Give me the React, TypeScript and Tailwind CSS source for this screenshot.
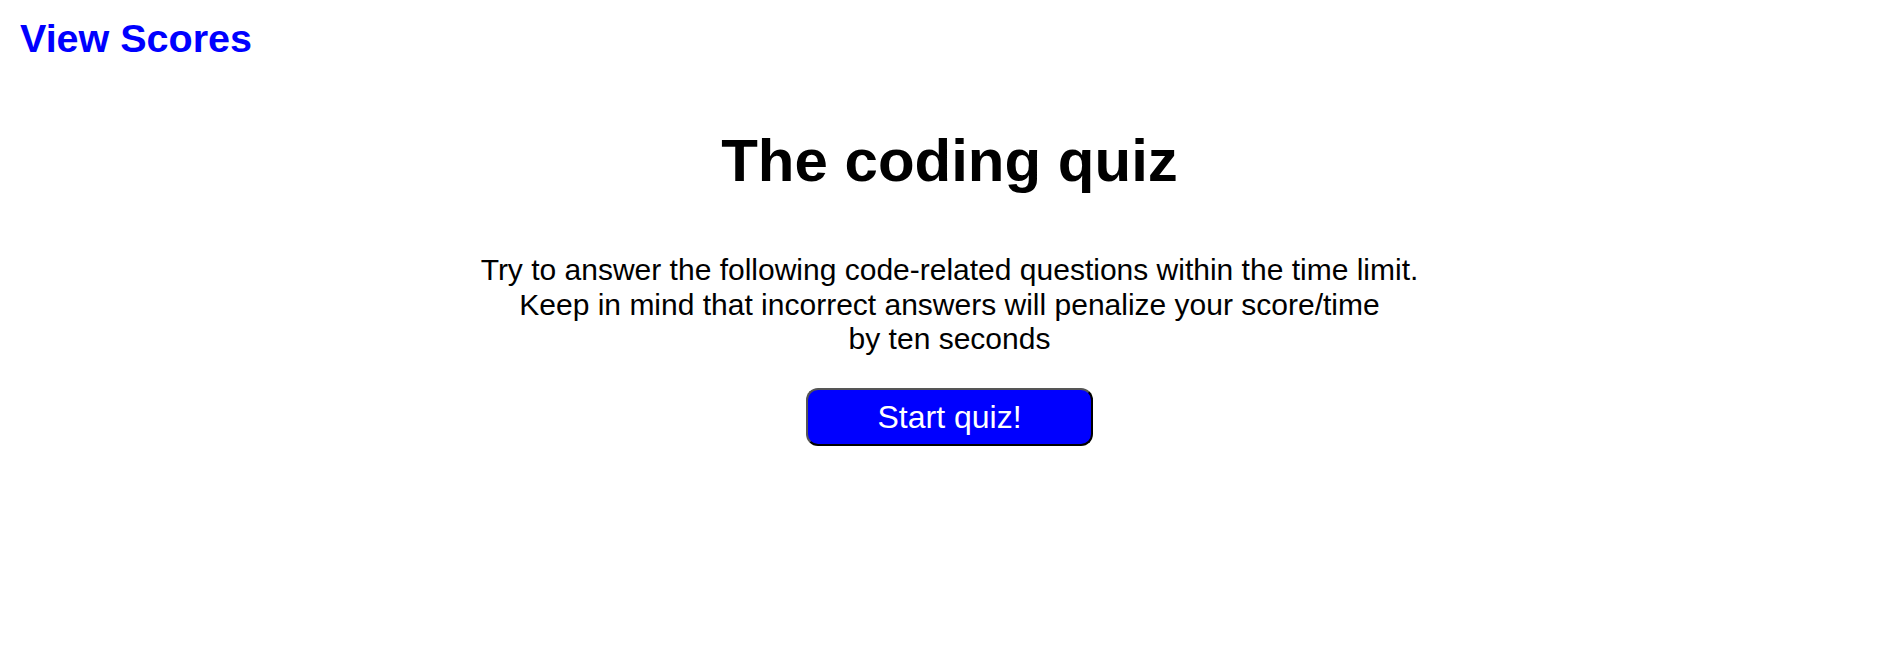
export default function App() {
  return (
    <div className="min-h-[663px] bg-white font-['Liberation_Sans',Arial,sans-serif] text-black">
      <header className="px-5 pt-[15px]">
        <a
          href="#"
          className="text-[39.5px] font-bold leading-[46px] text-[#0000ff] no-underline"
        >
          View Scores
        </a>
      </header>
      <main className="flex flex-col items-center">
        <h1 className="mt-[65px] text-[60px] font-bold leading-[69px]">
          The coding quiz
        </h1>
        <p className="mt-[58px] text-center text-[30px] leading-[34.5px]">
          Try to answer the following code-related questions within the time limit.
          <br />
          Keep in mind that incorrect answers will penalize your score/time
          <br />
          by ten seconds
        </p>
        <button
          type="button"
          className="mt-[31px] h-[58px] w-[287px] rounded-[12px] border-2 border-t-[#555] border-l-[#555] border-b-black border-r-black bg-[#0000ff] text-[32px] leading-none text-white"
        >
          Start quiz!
        </button>
      </main>
    </div>
  );
}
